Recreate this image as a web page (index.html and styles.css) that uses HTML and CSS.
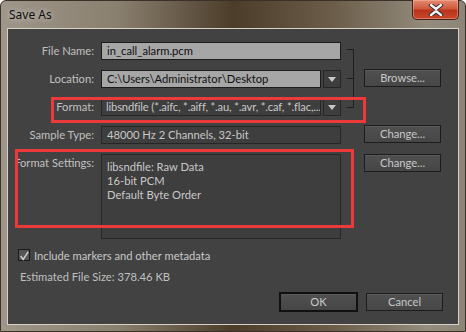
FILE: index.html
```html
<!DOCTYPE html>
<html lang="en">
<head>
    <meta charset="UTF-8" />
    <title>Save As</title>
    <link rel="stylesheet" href="styles.css">
</head>
<body>
    <div class="window">
        <div class="titlebar">
            <span class="title">Save As</span>
            <div class="close">
                <svg width="16" height="12" viewBox="0 0 16 12">
                    <path d="M3 1 L8 5 L13 1 M3 11 L8 7 L13 11" stroke="#2a2a35" stroke-width="4.2" fill="none" stroke-linecap="round"/>
                    <path d="M3 1 L8 5 L13 1 M3 11 L8 7 L13 11" stroke="#f4f4f4" stroke-width="2.4" fill="none" stroke-linecap="round"/>
                </svg>
            </div>
        </div>

        <div class="client">
            <div class="form">
                <label class="label">File Name:</label>
                <div class="field field-light">in_call_alarm.pcm</div>
                <div class="bracket">
                    <div class="bracket-top"></div>
                    <div class="bracket-bottom"></div>
                </div>
                <div></div>

                <label class="label">Location:</label>
                <div class="combo">
                    <div class="field field-light">C:\Users\Administrator\Desktop</div>
                    <div class="drop"><span class="arrow"></span></div>
                </div>
                <button class="btn">Browse...</button>

                <label class="label">Format:</label>
                <div class="combo">
                    <div class="field field-dark field-tight">libsndfile (*.aifc, *.aiff, *.au, *.avr, *.caf, *.flac,...</div>
                    <div class="drop"><span class="arrow"></span></div>
                </div>
                <div></div>

                <label class="label">Sample Type:</label>
                <div class="field field-dark">48000 Hz 2 Channels, 32-bit</div>
                <div></div>
                <button class="btn">Change...</button>

                <label class="label">Format Settings:</label>
                <div class="settings">
                    <div>libsndfile: Raw Data</div>
                    <div>16-bit PCM</div>
                    <div>Default Byte Order</div>
                </div>
                <div></div>
                <button class="btn">Change...</button>
            </div>

            <label class="check">
                <span class="box">
                    <svg width="12" height="12" viewBox="0 0 12 12">
                        <path d="M2 6 L5 10 L11 1" stroke="#d0d0d0" stroke-width="1.8" fill="none"/>
                    </svg>
                </span>
                Include markers and other metadata
            </label>

            <div class="estimate">Estimated File Size: 378.46 KB</div>

            <div class="actions">
                <button class="btn btn-ok">OK</button>
                <button class="btn btn-cancel">Cancel</button>
            </div>

            <div class="mark mark-format"></div>
            <div class="mark mark-settings"></div>
        </div>
    </div>
</body>
</html>
```

FILE: styles.css
```css
body {
    margin: 0;
    background: #ffffff;
    font-family: Lato, "Noto Sans", sans-serif;
    font-size: 11.2px;
}

.window {
    width: 466px;
    height: 332px;
    box-sizing: border-box;
    border: 1px solid #3a3228;
    border-radius: 6px 6px 0 0;
    background: linear-gradient(90deg, #9e968a 0%, #8a806f 25%, #4c3c2a 50%, #6c5e4a 72%, #948c7e 92%, #8c8476 100%);
    display: flex;
    flex-direction: column;
    padding: 0 6px 6px 6px;
}

.titlebar {
    height: 27px;
    display: flex;
    align-items: flex-start;
    justify-content: space-between;
}

.title {
    font-family: "Noto Sans", sans-serif;
    font-size: 12px;
    color: #101010;
    margin: 5px 0 0 2px;
    text-shadow: 0 0 6px rgba(255, 255, 255, 0.7);
}

.close {
    width: 45px;
    height: 19px;
    margin-top: -1px;
    border: 1px solid #4a2018;
    border-top: none;
    border-radius: 0 0 5px 5px;
    background: linear-gradient(180deg, #e48a72 0%, #d05a3c 45%, #b8341c 55%, #c8482c 100%);
    display: flex;
    align-items: center;
    justify-content: center;
    box-shadow: inset 0 0 0 1px rgba(255, 200, 180, 0.4);
}

.client {
    position: relative;
    flex: 1;
    background: #424242;
    border: 1px solid #d6d0c6;
    color: #c4c4c4;
}

.form {
    display: grid;
    grid-template-columns: 93px 240px 23px 77px;
    grid-template-rows: 18px 18px 18px 18px 85px;
    row-gap: 10px;
    padding-top: 13px;
}

.label {
    text-align: right;
    padding-right: 7px;
    line-height: 18px;
    color: #c0c0c0;
    white-space: nowrap;
}

.field {
    box-sizing: border-box;
    height: 18px;
    line-height: 16px;
    border: 1px solid #1c1c1c;
    padding: 0 5px;
    white-space: nowrap;
    overflow: hidden;
}

.field-light {
    background: #a6a6a6;
    color: #101010;
}

.field-dark {
    background: #3e3e3e;
    color: #c8c8c8;
    border-color: #262626;
}

.field-tight {
    padding: 0 2px 0 4px;
    letter-spacing: -0.15px;
}

.combo {
    display: flex;
    gap: 2px;
}

.combo .field {
    flex: 1;
}

.drop {
    box-sizing: border-box;
    width: 18px;
    height: 18px;
    border: 1px solid #262626;
    background: #3e3e3e;
    display: flex;
    align-items: center;
    justify-content: center;
}

.arrow {
    width: 0;
    height: 0;
    border-left: 4px solid transparent;
    border-right: 4px solid transparent;
    border-top: 5px solid #c8c8c8;
}

.bracket {
    grid-column: 3;
    grid-row: 1 / 4;
    display: flex;
    flex-direction: column;
    margin: 7px 0 0 6px;
    width: 7px;
    height: 59px;
}

.bracket-top {
    flex: 1;
    border-top: 1px solid #1e1e1e;
    border-right: 1px solid #1e1e1e;
    border-bottom: 1px solid #1e1e1e;
}

.bracket-bottom {
    flex: 1;
    border-right: 1px solid #1e1e1e;
    border-bottom: 1px solid #1e1e1e;
}

.btn {
    box-sizing: border-box;
    width: 77px;
    height: 18px;
    margin-top: -1px;
    padding: 0;
    border: 1px solid #1c1c1c;
    background: linear-gradient(180deg, #505050, #464646);
    color: #c8c8c8;
    font-family: Lato, "Noto Sans", sans-serif;
    font-size: 11.2px;
    line-height: 16px;
    box-shadow: inset 0 1px 0 #5a5a5a;
}

.form .btn:last-child {
    margin-top: 0;
}

.settings {
    box-sizing: border-box;
    border: 1px solid #262626;
    background: #3e3e3e;
    color: #c8c8c8;
    padding: 5px 5px;
    line-height: 14px;
}

.check {
    display: flex;
    align-items: center;
    gap: 4px;
    margin: 10px 0 0 10px;
    height: 12px;
    color: #c8c8c8;
}

.box {
    box-sizing: border-box;
    width: 12px;
    height: 12px;
    border: 1px solid #1a1a1a;
    background: #555555;
    display: flex;
}

.estimate {
    margin: 9px 0 0 12px;
    line-height: 14px;
    color: #c0c0c0;
}

.actions {
    display: flex;
    justify-content: flex-end;
    align-items: center;
    gap: 8px;
    margin-top: 8px;
    padding-right: 15px;
}

.btn-ok {
    width: 79px;
    height: 20px;
    border: 2px solid #101010;
    margin-top: 0;
}

.btn-cancel {
    width: 77px;
    height: 18px;
    margin-top: 0;
}

.mark {
    position: absolute;
    box-sizing: border-box;
    border: 3px solid #ec3a3a;
}

.mark-format {
    left: 43px;
    top: 68px;
    width: 315px;
    height: 26px;
}

.mark-settings {
    left: 7px;
    top: 120px;
    width: 339px;
    height: 79px;
}
```
